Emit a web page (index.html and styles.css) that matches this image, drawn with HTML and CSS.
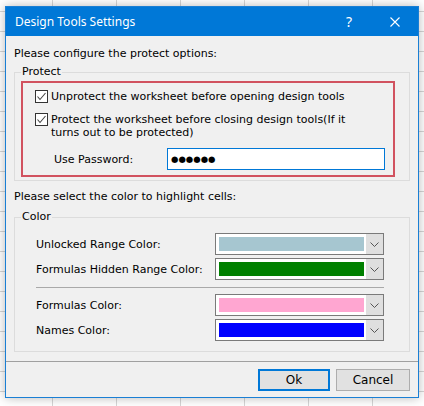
FILE: index.html
```html
<!DOCTYPE html>
<html lang="en">
<head>
  <meta charset="UTF-8" />
  <title>Design Tools Settings</title>
  <link rel="stylesheet" href="styles.css">
</head>
<body>
  <div class="dialog">
    <div class="titlebar">
      <div class="title">Design Tools Settings</div>
      <div class="title-btn">?</div>
      <div class="title-btn">
        <svg width="10" height="10" viewBox="0 0 10 10">
          <path d="M0.5 0.5 L9.5 9.5 M9.5 0.5 L0.5 9.5" stroke="#fff" stroke-width="1.1" fill="none" />
        </svg>
      </div>
    </div>

    <div class="content">
      <div class="caption">Please configure the protect options:</div>
      <fieldset class="group group-protect">
        <legend>Protect</legend>
        <div class="highlight">
          <div class="check-row">
            <span class="checkbox">
              <svg width="11" height="11" viewBox="0 0 11 11">
                <polyline points="1.5,5.5 4,8.5 9.5,2" stroke="#444" stroke-width="1.1" fill="none" />
              </svg>
            </span>
            <label>Unprotect the worksheet before opening design tools</label>
          </div>
          <div class="check-row second">
            <span class="checkbox">
              <svg width="11" height="11" viewBox="0 0 11 11">
                <polyline points="1.5,5.5 4,8.5 9.5,2" stroke="#444" stroke-width="1.1" fill="none" />
              </svg>
            </span>
            <label>Protect the worksheet before closing design tools(If it<br>turns out to be protected)</label>
          </div>
          <div class="password-row">
            <label>Use Password:</label>
            <div class="password">●●●●●●</div>
          </div>
        </div>
      </fieldset>

      <div class="caption caption-color">Please select the color to highlight cells:</div>
      <fieldset class="group group-color">
        <legend>Color</legend>
        <div class="color-list">
          <div class="color-row">
            <label>Unlocked Range Color:</label>
            <div class="combo">
              <span class="swatch swatch-unlocked"></span>
              <span class="combo-btn"><svg width="9" height="5" viewBox="0 0 9 5"><polyline points="0.5,0.5 4.5,4.5 8.5,0.5" stroke="#555" fill="none" /></svg></span>
            </div>
          </div>
          <div class="color-row">
            <label>Formulas Hidden Range Color:</label>
            <div class="combo">
              <span class="swatch swatch-hidden"></span>
              <span class="combo-btn"><svg width="9" height="5" viewBox="0 0 9 5"><polyline points="0.5,0.5 4.5,4.5 8.5,0.5" stroke="#555" fill="none" /></svg></span>
            </div>
          </div>
          <div class="divider"></div>
          <div class="color-row">
            <label>Formulas Color:</label>
            <div class="combo">
              <span class="swatch swatch-formulas"></span>
              <span class="combo-btn"><svg width="9" height="5" viewBox="0 0 9 5"><polyline points="0.5,0.5 4.5,4.5 8.5,0.5" stroke="#555" fill="none" /></svg></span>
            </div>
          </div>
          <div class="color-row">
            <label>Names Color:</label>
            <div class="combo">
              <span class="swatch swatch-names"></span>
              <span class="combo-btn"><svg width="9" height="5" viewBox="0 0 9 5"><polyline points="0.5,0.5 4.5,4.5 8.5,0.5" stroke="#555" fill="none" /></svg></span>
            </div>
          </div>
        </div>
      </fieldset>
    </div>

    <div class="footer">
      <button class="btn btn-default">Ok</button>
      <button class="btn">Cancel</button>
    </div>
  </div>
</body>
</html>
```

FILE: styles.css
```css
body {
  margin: 0;
  height: 406px;
  overflow: hidden;
  font-family: "DejaVu Sans", Verdana, sans-serif;
  font-size: 11px;
  color: #000;
  background-color: #fff;
  background-image:
    linear-gradient(to right, #d6d6d6 1px, transparent 1px),
    linear-gradient(to bottom, #d6d6d6 1px, transparent 1px);
  background-size: 64px 20px;
  background-position: 52px 11px;
}
.dialog {
  margin: 6px 0 0 5px;
  width: 414px;
  height: 392px;
  box-sizing: border-box;
  border: 1px solid #1a7fd4;
  background-color: #f0f0f0;
  box-shadow: 0 0 10px rgba(0, 0, 0, 0.28);
  display: flex;
  flex-direction: column;
}
.titlebar {
  height: 29px;
  background-color: #0078d7;
  color: #fff;
  display: flex;
  align-items: center;
  font-family: "Noto Sans", "Open Sans", sans-serif;
  font-size: 12px;
}
.title {
  flex: 1;
  padding-left: 9px;
}
.title-btn {
  width: 46px;
  height: 29px;
  display: flex;
  align-items: center;
  justify-content: center;
  font-size: 14px;
}
.content {
  flex: 1;
  padding: 11px 8px 0 8px;
}
.caption {
  line-height: 14px;
}
.caption-color {
  margin-top: 9px;
}
.group {
  margin: 4px 0 0 0;
  padding: 2px 14px 3px 6px;
  border: 1px solid #dcdcdc;
  min-width: 0;
}
.group legend {
  padding: 0 1px;
  line-height: 14px;
}
.highlight {
  border: 2px solid #d1525f;
  padding: 7px 7px 5px 12px;
}
.check-row {
  display: flex;
  align-items: flex-start;
  line-height: 13px;
}
.check-row.second {
  margin-top: 10px;
}
.checkbox {
  width: 11px;
  height: 11px;
  border: 1px solid #333;
  background-color: #fff;
  margin-right: 3px;
  flex-shrink: 0;
  display: flex;
}
.password-row {
  display: flex;
  align-items: center;
  margin-top: 9px;
}
.password-row label {
  margin-left: 19px;
  width: 113px;
}
.password {
  width: 218px;
  height: 22px;
  box-sizing: border-box;
  border: 1px solid #0078d7;
  background-color: #fff;
  padding-left: 3px;
  font-size: 8.5px;
  line-height: 20px;
}
.group-color {
  margin-top: 6px;
  padding: 9px 14px 10px 6px;
}
.color-list {
  margin-left: 15px;
  width: 348px;
}
.color-row {
  display: flex;
  align-items: center;
  margin-top: 3px;
}
.color-row:first-child {
  margin-top: 0;
}
.color-row label {
  width: 179px;
}
.combo {
  width: 169px;
  height: 22px;
  box-sizing: border-box;
  border: 1px solid #7a7a7a;
  background-color: #fff;
  display: flex;
}
.swatch {
  flex: 1;
  margin: 3px 2px 3px 3px;
}
.swatch-unlocked {
  background-color: #a6c6d0;
}
.swatch-hidden {
  background-color: #008000;
}
.swatch-formulas {
  background-color: #ffa6d1;
}
.swatch-names {
  background-color: #0000ff;
}
.combo-btn {
  width: 17px;
  background-color: #dfdfdf;
  display: flex;
  align-items: center;
  justify-content: center;
}
.divider {
  height: 1px;
  background-color: #a9a9a9;
  margin: 7px 0 6px 0;
}
.footer {
  border-top: 1px solid #a0a0a0;
  padding: 7px 8px 6px 0;
  display: flex;
  justify-content: flex-end;
  gap: 6px;
}
.btn {
  height: 22px;
  width: 74px;
  box-sizing: border-box;
  border: 1px solid #adadad;
  background-color: #e1e1e1;
  font-family: "DejaVu Sans", Verdana, sans-serif;
  font-size: 12px;
  color: #000;
  padding: 0;
}
.btn-default {
  width: 72px;
  border: 2px solid #0078d7;
}
```
